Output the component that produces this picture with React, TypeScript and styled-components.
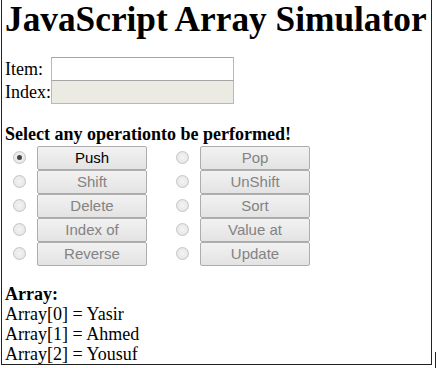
import styled, { createGlobalStyle } from "styled-components";

const GlobalStyle = createGlobalStyle`
  html, body {
    margin: 0;
    padding: 0;
    background: #ffffff;
  }
  body {
    font-family: "Liberation Serif", "Times New Roman", serif;
    color: #000000;
  }
`;

const Page = styled.div`
  position: relative;
  width: 437px;
  height: 368px;
  overflow: hidden;
`;

const Frame = styled.div`
  box-sizing: border-box;
  width: 431px;
  height: 367px;
  margin-left: 1px;
  margin-top: -2px;
  border: 1px solid #222;
  padding: 0 0 0 3px;
  font-size: 18px;
`;

const Title = styled.h1`
  margin: 0;
  font-size: 35.3px;
  font-weight: bold;
  line-height: 41px;
  white-space: nowrap;
`;

const Form = styled.div`
  margin-top: 17px;
  display: flex;
  flex-direction: column;
`;

const FieldRow = styled.div`
  display: flex;
  align-items: center;
  height: 23px;
  line-height: 20px;
`;

const Label = styled.span<{ $gap: number }>`
  margin-right: ${(p) => p.$gap}px;
`;

const TextInput = styled.input<{ $disabledLook?: boolean }>`
  box-sizing: border-box;
  width: 183px;
  height: 24px;
  border: 1px solid #b8b8b8;
  border-top-color: #a5a5a5;
  background: ${(p) => (p.$disabledLook ? "#ebebe4" : "#ffffff")};
  padding: 1px 2px;
  font-size: 14px;
  outline: none;
`;

const SectionTitle = styled.div`
  margin-top: 21px;
  font-weight: bold;
  line-height: 20px;
`;

const OpGrid = styled.div`
  display: grid;
  grid-template-columns: 163px 163px;
  row-gap: 1px;
  margin-top: 2px;
`;

const OpItem = styled.label`
  display: flex;
  align-items: center;
  height: 23px;
`;

const Radio = styled.span<{ $checked?: boolean }>`
  box-sizing: border-box;
  width: 13px;
  height: 13px;
  border-radius: 50%;
  margin-left: 8px;
  margin-right: 11px;
  border: 1px solid #c4c4c4;
  background: radial-gradient(circle at 50% 50%, #f4f4f4 0%, #e2e2e2 100%);
  display: flex;
  align-items: center;
  justify-content: center;
  &::after {
    content: "";
    display: ${(p) => (p.$checked ? "block" : "none")};
    width: 5px;
    height: 5px;
    border-radius: 50%;
    background: #444;
  }
`;

const OpButton = styled.button<{ $active?: boolean }>`
  box-sizing: border-box;
  width: 110px;
  height: 24px;
  border: 1px solid #adadad;
  border-radius: 2px;
  background: linear-gradient(#f2f2f2, #e3e3e3);
  font-family: "Liberation Sans", Arial, sans-serif;
  font-size: 15px;
  color: ${(p) => (p.$active ? "#000000" : "#838383")};
  padding: 0;
`;

const ArrayBlock = styled.div`
  margin-top: 19px;
  line-height: 20px;
`;

const ArrayTitle = styled.div`
  font-weight: bold;
`;

const EdgeMark = styled.div`
  position: absolute;
  left: 435px;
  top: 352px;
  width: 1px;
  height: 16px;
  background: #222;
`;

const ops: [string, string][] = [
  ["Push", "Pop"],
  ["Shift", "UnShift"],
  ["Delete", "Sort"],
  ["Index of", "Value at"],
  ["Reverse", "Update"],
];

const items = ["Yasir", "Ahmed", "Yousuf"];

export default function App() {
  return (
    <Page>
      <GlobalStyle />
      <Frame>
        <Title>JavaScript Array Simulator</Title>
        <Form>
          <FieldRow>
            <Label $gap={8}>Item:</Label>
            <TextInput type="text" />
          </FieldRow>
          <FieldRow>
            <Label $gap={0}>Index:</Label>
            <TextInput type="text" $disabledLook readOnly />
          </FieldRow>
        </Form>
        <SectionTitle>Select any operationto be performed!</SectionTitle>
        <OpGrid>
          {ops.flat().map((name, i) => (
            <OpItem key={name}>
              <Radio $checked={i === 0} />
              <OpButton $active={i === 0}>{name}</OpButton>
            </OpItem>
          ))}
        </OpGrid>
        <ArrayBlock>
          <ArrayTitle>Array:</ArrayTitle>
          {items.map((v, i) => (
            <div key={i}>
              Array[{i}] = {v}
            </div>
          ))}
        </ArrayBlock>
      </Frame>
      <EdgeMark />
    </Page>
  );
}
